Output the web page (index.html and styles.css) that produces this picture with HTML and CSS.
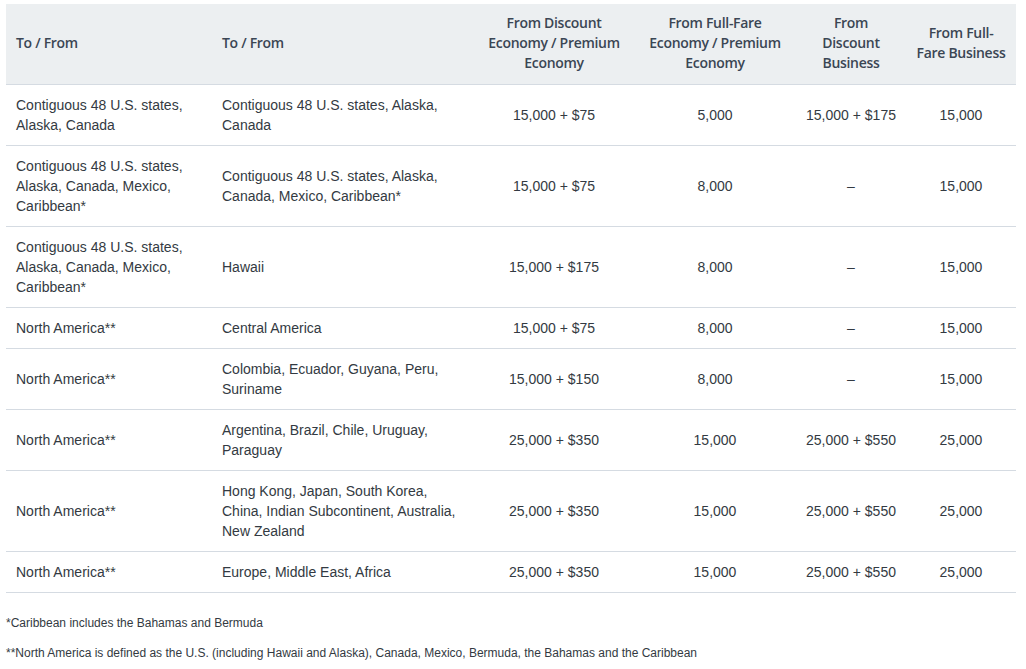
FILE: index.html
```html
<!DOCTYPE html>
<html>
<head>
<meta charset="utf-8">
<link rel="stylesheet" href="styles.css">
</head>
<body>
<div class="wrap">
<table class="awards">
  <colgroup>
    <col class="c1"><col class="c2"><col class="c3"><col class="c4"><col class="c5"><col class="c6">
  </colgroup>
  <thead>
    <tr>
      <th class="left">To / From</th>
      <th class="left">To / From</th>
      <th>From Discount Economy / Premium Economy</th>
      <th>From Full-Fare Economy / Premium Economy</th>
      <th>From Discount Business</th>
      <th>From Full-Fare Business</th>
    </tr>
  </thead>
  <tbody>
    <tr>
      <td class="left">Contiguous 48 U.S. states, Alaska, Canada</td>
      <td class="left">Contiguous 48 U.S. states, Alaska, Canada</td>
      <td>15,000 + $75</td><td>5,000</td><td>15,000 + $175</td><td>15,000</td>
    </tr>
    <tr>
      <td class="left">Contiguous 48 U.S. states, Alaska, Canada, Mexico, Caribbean*</td>
      <td class="left">Contiguous 48 U.S. states, Alaska, Canada, Mexico, Caribbean*</td>
      <td>15,000 + $75</td><td>8,000</td><td>–</td><td>15,000</td>
    </tr>
    <tr>
      <td class="left">Contiguous 48 U.S. states, Alaska, Canada, Mexico, Caribbean*</td>
      <td class="left">Hawaii</td>
      <td>15,000 + $175</td><td>8,000</td><td>–</td><td>15,000</td>
    </tr>
    <tr>
      <td class="left">North America**</td>
      <td class="left">Central America</td>
      <td>15,000 + $75</td><td>8,000</td><td>–</td><td>15,000</td>
    </tr>
    <tr>
      <td class="left">North America**</td>
      <td class="left">Colombia, Ecuador, Guyana, Peru, Suriname</td>
      <td>15,000 + $150</td><td>8,000</td><td>–</td><td>15,000</td>
    </tr>
    <tr>
      <td class="left">North America**</td>
      <td class="left">Argentina, Brazil, Chile, Uruguay, Paraguay</td>
      <td>25,000 + $350</td><td>15,000</td><td>25,000 + $550</td><td>25,000</td>
    </tr>
    <tr>
      <td class="left">North America**</td>
      <td class="left">Hong Kong, Japan, South Korea, China, Indian Subcontinent, Australia, New Zealand</td>
      <td>25,000 + $350</td><td>15,000</td><td>25,000 + $550</td><td>25,000</td>
    </tr>
    <tr>
      <td class="left">North America**</td>
      <td class="left">Europe, Middle East, Africa</td>
      <td>25,000 + $350</td><td>15,000</td><td>25,000 + $550</td><td>25,000</td>
    </tr>
  </tbody>
</table>
<p class="note first">*Caribbean includes the Bahamas and Bermuda</p>
<p class="note">**North America is defined as the U.S. (including Hawaii and Alaska), Canada, Mexico, Bermuda, the Bahamas and the Caribbean</p>
</div>
</body>
</html>
```

FILE: styles.css
```css
html, body {
  margin: 0;
  padding: 0;
  background: #ffffff;
}
.wrap {
  padding: 4px 10px 0 6px;
  font-family: "Liberation Sans", Arial, sans-serif;
  color: #333a42;
}
.awards {
  width: 1010px;
  border-collapse: collapse;
  table-layout: fixed;
}
.c1 { width: 206px; }
.c2 { width: 262px; }
.c3 { width: 160px; }
.c4 { width: 162px; }
.c5 { width: 110px; }
.c6 { width: 110px; }
.awards th {
  background: #eceff1;
  font-family: "Open Sans", sans-serif;
  font-weight: 600;
  font-size: 14px;
  line-height: 20px;
  letter-spacing: -0.3px;
  color: #3b4654;
  padding: 9px 10px 11px;
  text-align: center;
  vertical-align: middle;
  border-bottom: 1px solid #d5dbe2;
}
.awards td {
  font-size: 14px;
  line-height: 20px;
  padding: 10px 10px;
  text-align: center;
  vertical-align: middle;
  border-bottom: 1px solid #d5dbe2;
}
.awards .left {
  text-align: left;
}
.note {
  font-size: 12px;
  line-height: 16px;
  margin: 22px 0 0 0;
}
.note + .note {
  margin-top: 14px;
}
```
